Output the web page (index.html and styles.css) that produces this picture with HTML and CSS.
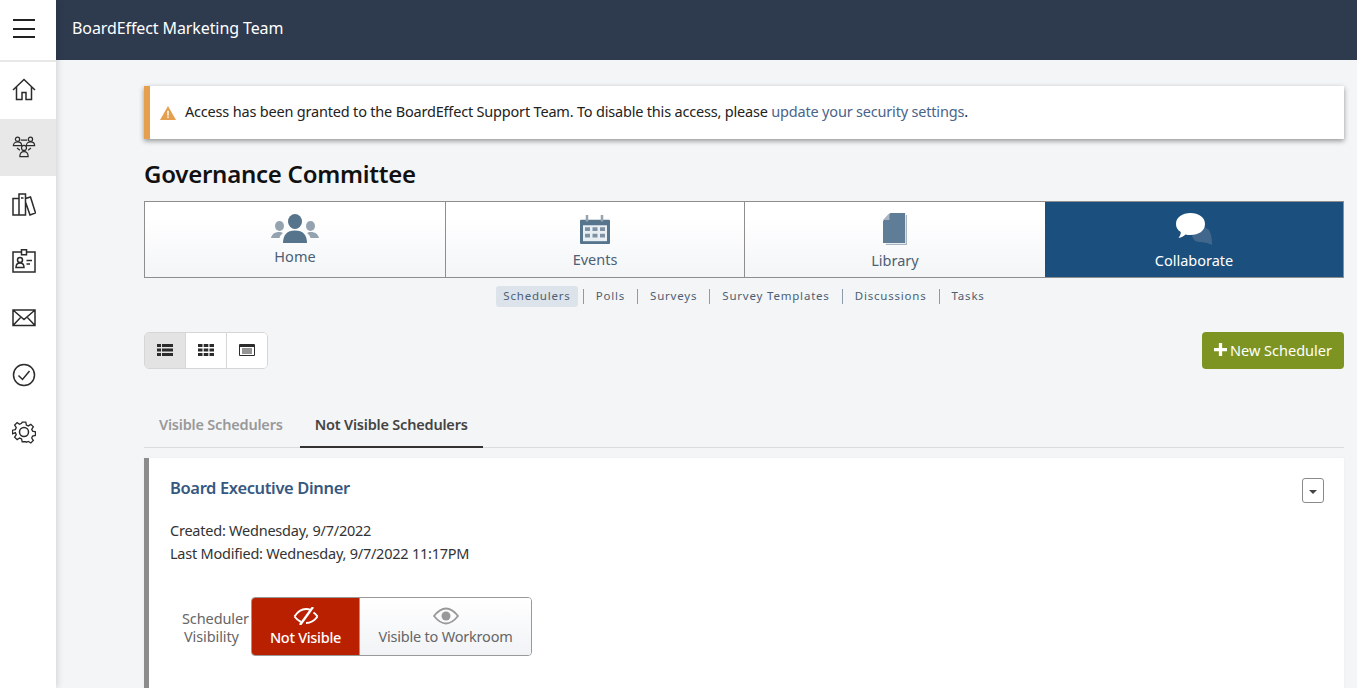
FILE: index.html
```html
<!DOCTYPE html>
<html lang="en">
<head>
<meta charset="utf-8">
<title>Governance Committee</title>
<link rel="stylesheet" href="styles.css">
</head>
<body>
<div class="app">
  <aside class="sidebar">
    <div class="burger"><span></span><span></span><span></span></div>
    <nav class="side-nav">
      <a class="side-item"><svg viewBox="0 0 24 24" class="side-icon"><path d="M1 12 12 1.500 23 12M4.500 9v12.500h5.500v-7h4v7h5.500V9"/></svg></a>
      <a class="side-item is-active"><svg viewBox="0 0 26 24" class="side-icon team"><circle cx="6" cy="3.500" r="2.300"/><circle cx="20" cy="3.500" r="2.300"/><circle cx="13" cy="13" r="2.700"/><path d="M1.500 10.500c0-2.500 2-4 4.500-4s4.500 1.500 4.500 4zM15.500 10.500c0-2.500 2-4 4.500-4s4.500 1.500 4.500 4zM8.500 22.500c0-3.500 2-5.500 4.500-5.500s4.500 2 4.500 5.500zM9.500 4.500h7M5.500 13l3 2.500M20.500 13l-3 2.500"/></svg></a>
      <a class="side-item"><svg viewBox="0 0 24 24" class="side-icon"><path d="M1 6.500h6V23H1zM7 2h6.500v21H7zM13.500 6.500l5-1.500L23.500 21l-5.500 2-4.500-13M9 6h2.500"/></svg></a>
      <a class="side-item"><svg viewBox="0 0 24 24" class="side-icon"><path d="M9.500 3H1v20h22V3h-8.500M9.500 .8h5v5h-5z"/><circle cx="8" cy="11" r="2.500"/><path d="M4 18.500c0-3 1.500-4.500 4-4.500s4 1.500 4 4.500zM14.500 11.500H20M14.500 15H18"/></svg></a>
      <a class="side-item"><svg viewBox="0 0 24 18" class="side-icon mail"><path d="M1 1h22v15.500H1zM1 1l11 9.500L23 1M1 16.500 9 8M23 16.500 15 8"/></svg></a>
      <a class="side-item"><svg viewBox="0 0 24 24" class="side-icon"><circle cx="12" cy="12" r="10.500"/><path d="m6.500 12.500 4 4 7-8.500"/></svg></a>
      <a class="side-item"><svg viewBox="0 0 24 24" class="side-icon"><circle cx="12" cy="12" r="4.500"/><path d="M10 1h4l.7 3.200 2.200 1 2.800-1.800 2.800 2.800-1.800 2.800 1 2.200 3.200.7v4l-3.200.7-1 2.200 1.800 2.800-2.800 2.800-2.800-1.800-2.200 1L14 23h-4l-.7-3.200-2.200-1-2.800 1.800-2.800-2.800 1.800-2.800-1-2.200L-.9 14v-4l3.200-.7 1-2.200-1.800-2.800 2.800-2.800 2.800 1.800 2.200-1z" transform="translate(1.300 1.300) scale(.89)"/></svg></a>
    </nav>
  </aside>
  <div class="page">
    <header class="topbar">BoardEffect Marketing Team</header>
    <main class="main">
      <div class="alert">
        <svg viewBox="0 0 18 16" class="alert-icon"><path d="M9 0 18 16H0z" fill="#e5a04f"/><path d="M8.200 5.500h1.600v5.500H8.200zM8.200 12h1.600v1.700H8.200z" fill="#fff"/></svg>
        <span class="alert-text">Access has been granted to the BoardEffect Support Team. To disable this access, please <a class="link">update your security settings</a>.</span>
      </div>
      <h1 class="title">Governance Committee</h1>
      <div class="tabs">
        <a class="tab tab-home">
          <svg viewBox="0 0 48 29" class="tab-icon people"><ellipse cx="8.500" cy="12" rx="4.500" ry="5" fill="#95a3b1"/><ellipse cx="39.500" cy="12" rx="4.500" ry="5" fill="#95a3b1"/><path d="M0 24c1-4 4-6 8-6 2 0 3 .5 4 1-2 1.500-3 3-3.500 5zM48 24c-1-4-4-6-8-6-2 0-3 .5-4 1 2 1.500 3 3 3.500 5z" fill="#95a3b1"/><ellipse cx="24" cy="7.500" rx="7" ry="7.500" fill="#56748c"/><path d="M12 29c0-8 4-12.500 12-12.500S36 21 36 29z" fill="#56748c"/></svg>
          <span>Home</span>
        </a>
        <a class="tab tab-events">
          <svg viewBox="0 0 30 32" class="tab-icon cal" preserveAspectRatio="none"><path d="M1 6h28a1 1 0 0 1 1 1v24a1 1 0 0 1-1 1H1a1 1 0 0 1-1-1V7a1 1 0 0 1 1-1z" fill="#56748c"/><rect x="3" y="12" width="24" height="17" fill="#e9eef2"/><path d="M5 14h5v4H5zM12.500 14h5v4h-5zM20 14h5v4h-5zM5 21h5v4H5zM12.500 21h5v4h-5zM20 21h5v4h-5z" fill="#7d93a5"/><path d="M7 1v7M22 1v7" stroke="#95a3b1" stroke-width="2.500" fill="none"/></svg>
          <span>Events</span>
        </a>
        <a class="tab tab-library">
          <svg viewBox="0 0 26 32" class="tab-icon doc" preserveAspectRatio="none"><path d="M3 31.500h22.500V2" fill="none" stroke="#a9b6c1" stroke-width="1.500"/><path d="M8 0h16v30H0V8z" fill="#5f7d96"/><path d="M7 0v7H0z" fill="#a9b6c1"/></svg>
          <span>Library</span>
        </a>
        <a class="tab tab-active">
          <svg viewBox="0 0 36 32" class="tab-icon chat"><path d="M22 14c5-1 8 0 11 3 2 3 3 8 3 15-4-2-8-3-12-3-5 0-7-3-8-6z" fill="#41678c"/><path d="M14.500 0C22.500 0 29 4 29 11s-6.500 11-14.500 11c-2 0-3.500 0-5-.500-2 2-4 3-7 3.500 1.500-2 2.200-3.500 2.300-6C1.500 17 0 14.500 0 11 0 4 6.500 0 14.500 0z" fill="#fff"/></svg>
          <span>Collaborate</span>
        </a>
      </div>
      <nav class="subnav">
        <a class="sub-item is-current">Schedulers</a><i class="sep"></i>
        <a class="sub-item">Polls</a><i class="sep"></i>
        <a class="sub-item">Surveys</a><i class="sep"></i>
        <a class="sub-item">Survey Templates</a><i class="sep"></i>
        <a class="sub-item">Discussions</a><i class="sep"></i>
        <a class="sub-item">Tasks</a>
      </nav>
      <div class="toolbar">
        <div class="views">
          <button class="view is-on"><svg viewBox="0 0 16 12" class="view-icon"><path d="M0 0h4v3H0zM5 0h11v3H5zM0 4.500h4v3H0zM5 4.500h11v3H5zM0 9h4v3H0zM5 9h11v3H5z"/></svg></button>
          <button class="view"><svg viewBox="0 0 16 12" class="view-icon"><path d="M0 0h4.500v3H0zM5.700 0h4.600v3H5.700zM11.500 0H16v3h-4.500zM0 4.500h4.500v3H0zM5.700 4.500h4.600v3H5.700zM11.500 4.500H16v3h-4.500zM0 9h4.500v3H0zM5.700 9h4.600v3H5.700zM11.500 9H16v3h-4.500z"/></svg></button>
          <button class="view"><svg viewBox="0 0 16 12" class="view-icon"><path fill-rule="evenodd" d="M1 0h14a1 1 0 0 1 1 1v10a1 1 0 0 1-1 1H1a1 1 0 0 1-1-1V1a1 1 0 0 1 1-1zM1 3v8h14V3zM3 4.500h10v1H3zM3 6.500h10v1H3zM3 8.500h10v1H3z"/></svg></button>
        </div>
        <button class="new-btn"><svg viewBox="0 0 12 12" class="plus"><path d="M4.500 0h3v4.500H12v3H7.500V12h-3V7.500H0v-3h4.500z"/></svg>New Scheduler</button>
      </div>
      <div class="vis-tabs">
        <a class="vis-tab">Visible Schedulers</a>
        <a class="vis-tab is-on">Not Visible Schedulers</a>
      </div>
      <section class="card">
        <div class="card-head">
          <h2 class="card-title">Board Executive Dinner</h2>
          <button class="caret-btn"><i class="caret"></i></button>
        </div>
        <p class="meta">Created: Wednesday, 9/7/2022<br>Last Modified: Wednesday, 9/7/2022 11:17PM</p>
        <div class="visibility">
          <div class="vis-label"><span class="vl-top">Scheduler</span><span class="vl-bottom">Visibility</span></div>
          <div class="switch">
            <button class="sw sw-off">
              <svg viewBox="0 0 26 18" class="sw-icon"><path d="M1.500 9.500C5 4 9 2 13 2c2 0 3.500.5 5 1.200M1.500 9.500C3 11.500 5 13.500 8 15M24.500 9.500C23 7.500 22 6.500 20.500 5.500M24.500 9.500C22 13 18 16 13 16" fill="none" stroke="#fff" stroke-width="2"/><path d="M20 0 7 18" stroke="#fff" stroke-width="2.400"/></svg>
              <span>Not Visible</span>
            </button>
            <button class="sw sw-on">
              <svg viewBox="0 0 26 18" class="sw-icon"><path d="M1 9c4-5 8-7.500 12-7.500S21 4 25 9c-4 5-8 7.500-12 7.500S5 14 1 9z" fill="none" stroke="#999" stroke-width="1.800"/><circle cx="13" cy="9" r="4.500" fill="#999"/></svg>
              <span>Visible to Workroom</span>
            </button>
          </div>
        </div>
      </section>
    </main>
  </div>
</div>
</body>
</html>
```
FILE: styles.css
```css
* { box-sizing: border-box; }
html, body { margin: 0; height: 100%; overflow: hidden; }
body { font-family: "Noto Sans", "Open Sans", sans-serif; font-size: 14.500px; color: #333; background: #f4f5f7; }
a { text-decoration: none; color: inherit; }
button { font: inherit; cursor: pointer; }
.app { display: flex; height: 688px; }
.sidebar { width: 56px; flex: none; background: #fff; box-shadow: 2px 0 6px rgba(0,0,0,.12); z-index: 2; }
.burger { height: 62px; border-bottom: 2px solid #e8e8e8; padding: 19px 13px 0 13px; display: flex; flex-direction: column; gap: 6.500px; }
.burger span { display: block; height: 2px; width: 22px; background: #222; }
.side-nav { display: flex; flex-direction: column; }
.side-item { height: 57px; display: flex; align-items: center; justify-content: center; padding: 0 8px 2px 0; }
.side-item.is-active { background: #e8e8e8; }
.side-icon { width: 24px; height: 24px; fill: none; stroke: #2b2b2b; stroke-width: 1.500; }
.side-icon.team { stroke-width: 1.300; }
.side-icon.mail { height: 18px; }
.page { flex: 1; min-width: 0; display: flex; flex-direction: column; }
.topbar { height: 60px; flex: none; background: #2e3a4e; color: #fff; font-size: 16px; letter-spacing: -.1px; padding: 0 16px 4px; display: flex; align-items: center; }
.main { flex: 1; padding: 26px 13px 0 88px; }
.alert { height: 53px; background: #fff; border-left: 6px solid #e5a04f; box-shadow: 0 2px 5px rgba(0,0,0,.4); display: flex; align-items: center; gap: 9px; padding: 0 0 0 10px; color: #222; }
.alert-icon { width: 16px; height: 16px; flex: none; }
.alert-text { letter-spacing: -.19px; padding-bottom: 3px; }
.link { color: #4a6488; }
.title { margin: 19px 0 11px; font-size: 24px; line-height: 32px; font-weight: 600; color: #111; letter-spacing: -.25px; }
.tabs { display: flex; height: 77px; border: 1px solid #8e8e8e; }
.tab { flex: 1; display: flex; flex-direction: column; align-items: center; background: linear-gradient(#fff 20%, #f3f5f7); border-right: 1px solid #8e8e8e; color: #4c5f74; font-size: 14.500px; }
.tab-home { padding-top: 12px; gap: 3px; flex: 0 0 301px; }
.tab-events { padding-top: 12px; gap: 5px; flex: 0 0 299px; }
.tab-library { padding-top: 11px; gap: 5px; flex: 0 0 300px; border-right: 0; }
.tab-active { padding-top: 11px; gap: 5px; background: #1b4f7e; color: #fff; border-right: 0; }
.tab-icon { display: block; height: 32px; flex: none; }
.people { width: 48px; height: 29px; }
.cal { width: 30px; height: 30px; }
.doc { width: 24px; }
.chat { width: 36px; }
.subnav { display: flex; justify-content: center; align-items: center; margin-top: 7px; font-size: 11.500px; letter-spacing: .8px; color: #4c5f74; height: 22px; }
.sub-item { padding: 0 7px 1px; line-height: 20px; border-radius: 3px; }
.sub-item.is-current { background: #dde3ea; }
.sep { width: 1px; height: 15px; background: #8e9aa8; margin: 0 5px 0 5px; }
.toolbar { display: flex; justify-content: space-between; margin-top: 25px; }
.views { display: flex; height: 37px; border: 1px solid #d6d6d6; border-radius: 5px; background: #fff; overflow: hidden; }
.view { width: 41px; border: 0; border-right: 1px solid #d6d6d6; background: #fff; padding: 0 0 2px; display: flex; align-items: center; justify-content: center; }
.view:last-child { width: 40px; border-right: 0; }
.view.is-on { background: #e3e3e3; }
.view-icon { width: 16px; height: 12px; fill: #2b2b2b; }
.new-btn { height: 37px; width: 142px; border: 0; border-radius: 4px; background: #7d9423; color: #fff; font-size: 14.500px; display: flex; align-items: center; justify-content: center; gap: 3px; padding: 0 0 2px; }
.plus { width: 13px; height: 13px; fill: #fff; }
.vis-tabs { display: flex; margin-top: 36px; border-bottom: 1px solid #dcdcdc; height: 43px; }
.vis-tab { padding: 0 15px; line-height: 38px; font-weight: 600; font-size: 14.500px; letter-spacing: -.2px; color: #999; height: 43px; }
.vis-tab.is-on { color: #444; border-bottom: 2px solid #333; margin-left: 2px; }
.card { margin-top: 10px; height: 240px; background: #fff; border-left: 5px solid #8c8c8c; padding: 0 20px 0 21px; box-shadow: 0 0 3px rgba(0,0,0,.04); }
.card-head { display: flex; justify-content: space-between; align-items: flex-start; height: 53px; }
.card-title { margin: 18px 0 0; font-size: 16.500px; line-height: 24px; font-weight: 600; color: #36587f; letter-spacing: -.36px; }
.caret-btn { width: 22px; height: 25px; margin: 20px 0 0; padding: 0; background: #fff; border: 1px solid #8a8a8a; border-radius: 3px; display: flex; align-items: center; justify-content: center; }
.caret { width: 0; height: 0; border: 4px solid transparent; border-top-color: #444; border-bottom: 0; margin-top: 2px; }
.meta { margin: 8px 0 0; font-size: 14.500px; line-height: 23px; color: #333; letter-spacing: -.23px; }
.visibility { display: flex; margin-top: 32px; padding-left: 12px; }
.vis-label { width: 69px; color: #666; font-size: 14.500px; line-height: 18px; padding-top: 12px; white-space: nowrap; letter-spacing: -.1px; }
.vl-top { display: block; }
.vl-bottom { display: block; padding-left: 2px; }
.switch { display: flex; height: 59px; width: 281px; border: 1px solid #999; border-radius: 4px; overflow: hidden; }
.sw { border: 0; padding: 9px 0 0; display: flex; flex-direction: column; align-items: center; font-size: 14.500px; letter-spacing: -.2px; }
.sw-off { width: 107px; background: #b92000; color: #fff; gap: 2px; font-weight: 500; letter-spacing: -.3px; }
.sw-on { flex: 1; background: linear-gradient(#fff, #f1f3f6); color: #666; border-left: 1px solid #999; gap: 1px; }
.sw-icon { width: 26px; height: 18px; display: block; flex: none; }
```
